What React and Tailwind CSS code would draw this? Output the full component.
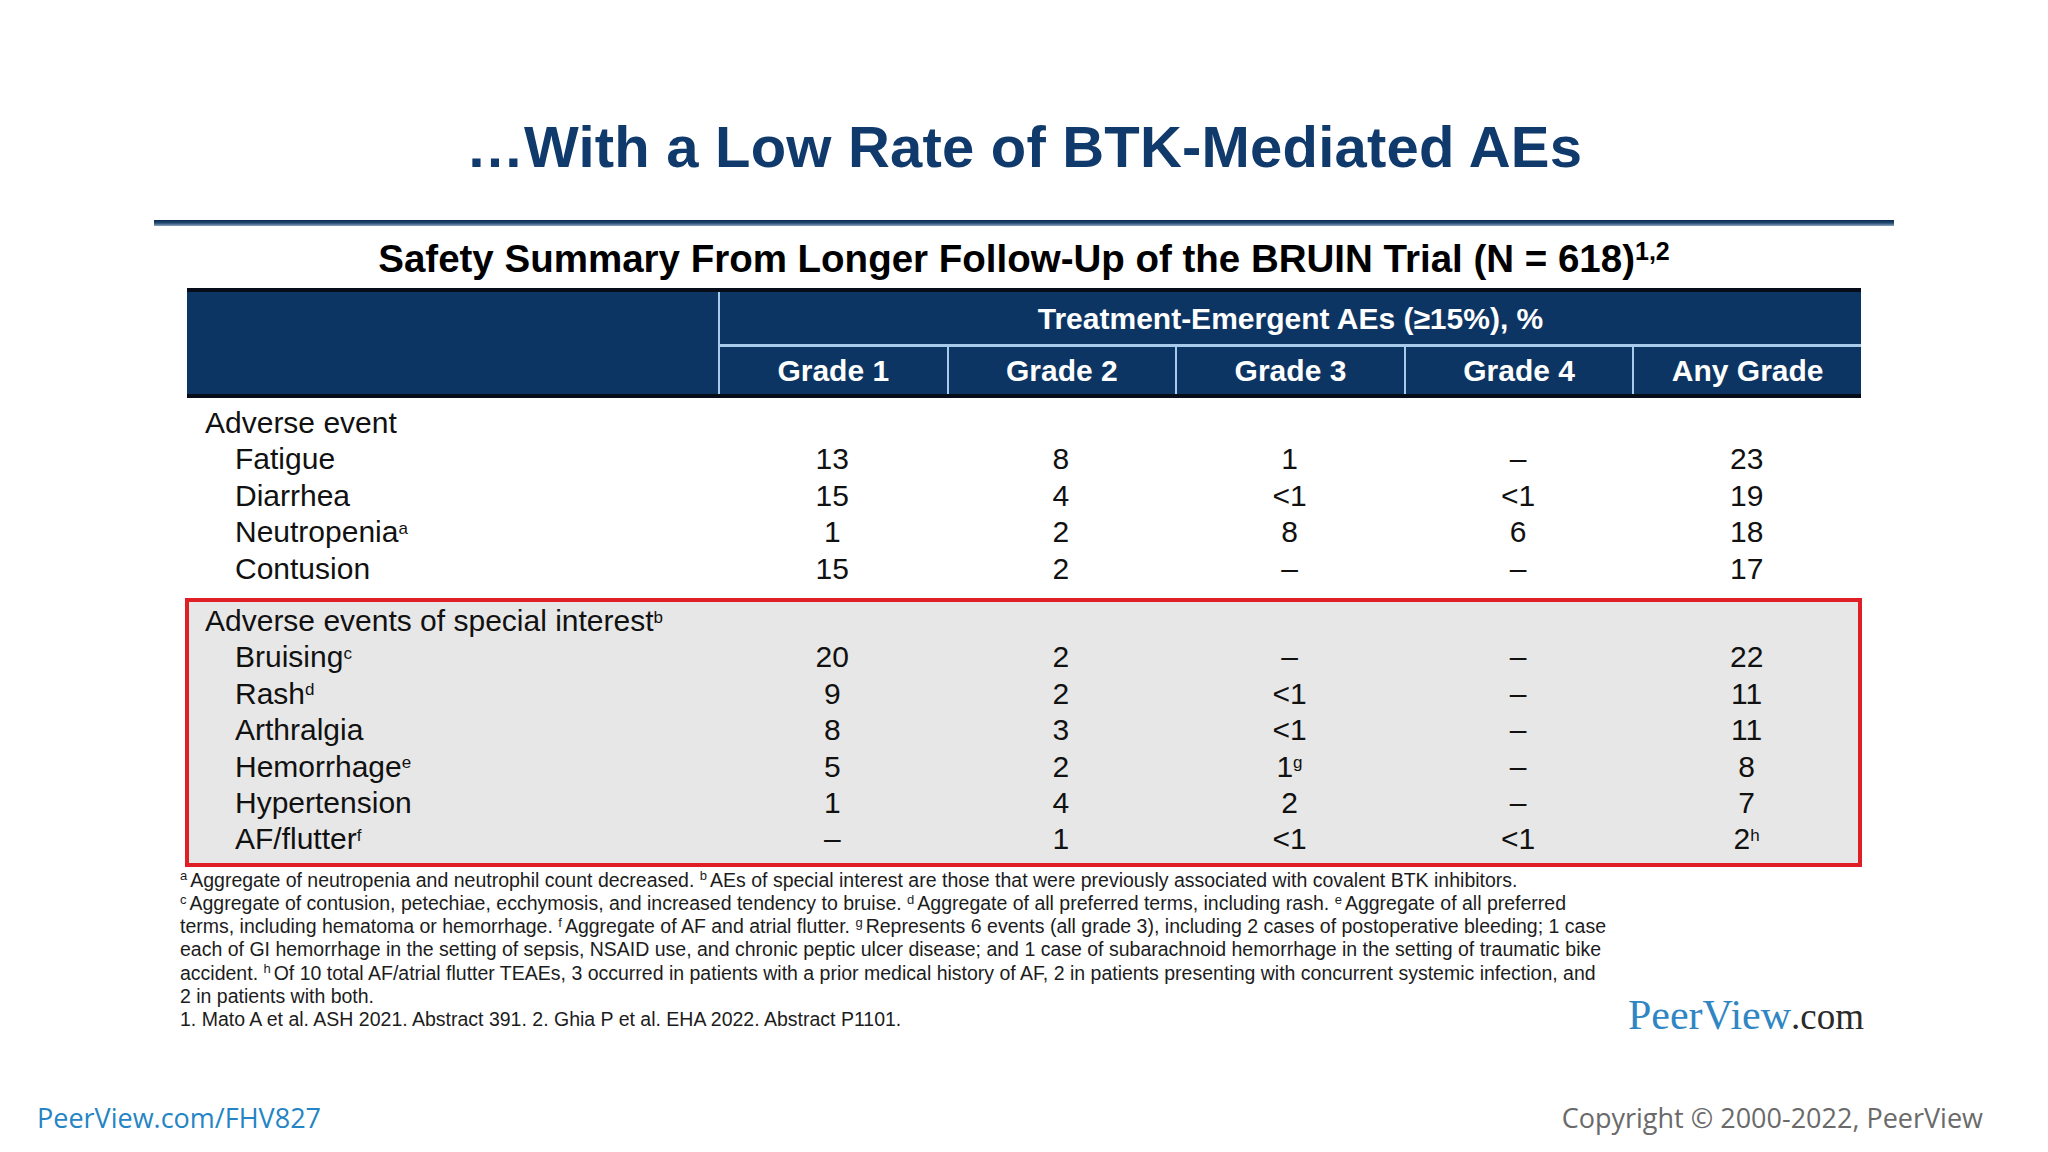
const grades = ['Grade 1', 'Grade 2', 'Grade 3', 'Grade 4', 'Any Grade']

const common = [
  { label: 'Fatigue', vals: ['13', '8', '1', '–', '23'] },
  { label: 'Diarrhea', vals: ['15', '4', '<1', '<1', '19'] },
  { label: 'Neutropenia', sup: 'a', vals: ['1', '2', '8', '6', '18'] },
  { label: 'Contusion', vals: ['15', '2', '–', '–', '17'] }
]

const special = [
  { label: 'Bruising', sup: 'c', vals: ['20', '2', '–', '–', '22'] },
  { label: 'Rash', sup: 'd', vals: ['9', '2', '<1', '–', '11'] },
  { label: 'Arthralgia', vals: ['8', '3', '<1', '–', '11'] },
  { label: 'Hemorrhage', sup: 'e', vals: ['5', '2', ['1', 'g'], '–', '8'] },
  { label: 'Hypertension', vals: ['1', '4', '2', '–', '7'] },
  { label: 'AF/flutter', sup: 'f', vals: ['–', '1', '<1', '<1', ['2', 'h']] }
]

function Sup({ children }) {
  return <sup className="text-[17px]">{children}</sup>
}

function Cell({ v }) {
  if (Array.isArray(v)) {
    return (
      <div className="text-center">
        {v[0]}
        <Sup>{v[1]}</Sup>
      </div>
    )
  }
  return <div className="text-center">{v}</div>
}

function Rows({ heading, headingSup, rows }) {
  return (
    <div className="grid grid-cols-[531px_repeat(5,1fr)] w-[1674px] text-[30px] leading-[36.4px] text-[#111]">
      <div className="col-span-6 pl-[18px]">
        {heading}
        {headingSup && <Sup>{headingSup}</Sup>}
      </div>
      {rows.map((r) => (
        <div key={r.label} className="contents">
          <div className="pl-[48px]">
            {r.label}
            {r.sup && <Sup>{r.sup}</Sup>}
          </div>
          {r.vals.map((v, i) => (
            <Cell key={i} v={v} />
          ))}
        </div>
      ))}
    </div>
  )
}

function FnSup({ children }) {
  return <sup className="text-[13px] mr-[3px]">{children}</sup>
}

export default function App() {
  return (
    <div className="w-[2048px] h-[1152px] bg-white flex flex-col font-['Liberation_Sans',Arial,sans-serif] overflow-hidden">
      <h1 className="pt-[112px] text-center text-[58px] leading-[70px] font-bold text-[#0f3a6b] tracking-[0.2px]">
        …With a Low Rate of BTK-Mediated AEs
      </h1>

      <div className="mt-[38px] ml-[154px] w-[1740px] h-[6px] bg-linear-to-b from-[#0b2a4e] via-[#234a72] to-[#8fa7bf]" />

      <h2 className="mt-[11px] text-center text-[38.5px] leading-[44px] font-bold text-black">
        Safety Summary From Longer Follow-Up of the BRUIN Trial (N = 618)
        <sup className="text-[25px]">1,2</sup>
      </h2>

      <div className="mt-[7px] ml-[187px] w-[1674px]">
        {/* header */}
        <div className="flex border-t-4 border-b-4 border-[#070d18] bg-[#0d3563] text-white font-bold text-[30px]">
          <div className="w-[531px] shrink-0" />
          <div className="flex-1 flex flex-col border-l-2 border-[#a9cbea]">
            <div className="h-[52px] flex items-center justify-center">
              Treatment-Emergent AEs (≥15%), %
            </div>
            <div className="flex border-t-[3px] border-[#a9cbea] h-[50px]">
              {grades.map((g, i) => (
                <div
                  key={g}
                  className={`flex-1 flex items-center justify-center ${i > 0 ? 'border-l-2 border-[#a9cbea]' : ''}`}
                >
                  {g}
                </div>
              ))}
            </div>
          </div>
        </div>

        <div className="mt-[7px]">
          <Rows heading="Adverse event" rows={common} />
        </div>

        <div className="mt-[11px] -ml-[2px] w-[1677px] border-4 border-[#df1f26] bg-[#e7e7e7] pt-[1px] pb-[5px]">
          <div className="-ml-[2px]">
            <Rows heading="Adverse events of special interest" headingSup="b" rows={special} />
          </div>
        </div>
      </div>

      <div className="mt-[2px] ml-[180px] w-[1684px] flex justify-between items-end">
        <div className="text-[19.5px] leading-[23.2px] text-[#1c1c1c] whitespace-nowrap">
          <div>
            <FnSup>a</FnSup>Aggregate of neutropenia and neutrophil count decreased. <FnSup>b</FnSup>AEs of special interest are those that were previously associated with covalent BTK inhibitors.
          </div>
          <div>
            <FnSup>c</FnSup>Aggregate of contusion, petechiae, ecchymosis, and increased tendency to bruise. <FnSup>d</FnSup>Aggregate of all preferred terms, including rash. <FnSup>e</FnSup>Aggregate of all preferred
          </div>
          <div>
            terms, including hematoma or hemorrhage. <FnSup>f</FnSup>Aggregate of AF and atrial flutter. <FnSup>g</FnSup>Represents 6 events (all grade 3), including 2 cases of postoperative bleeding; 1 case
          </div>
          <div>
            each of GI hemorrhage in the setting of sepsis, NSAID use, and chronic peptic ulcer disease; and 1 case of subarachnoid hemorrhage in the setting of traumatic bike
          </div>
          <div>
            accident. <FnSup>h</FnSup>Of 10 total AF/atrial flutter TEAEs, 3 occurred in patients with a prior medical history of AF, 2 in patients presenting with concurrent systemic infection, and
          </div>
          <div>2 in patients with both.</div>
          <div>1. Mato A et al. ASH 2021. Abstract 391. 2. Ghia P et al. EHA 2022. Abstract P1101.</div>
        </div>
        <div className="mb-[-7px] font-['Liberation_Serif',serif] text-[42px] leading-[42px] whitespace-nowrap">
          <span className="text-[#2f86c3]">PeerView</span>
          <span className="text-[#2a2a2a] text-[37px]">.com</span>
        </div>
      </div>

      <div className="mt-auto pb-[16px] pl-[37px] pr-[65px] flex justify-between font-['Open_Sans',sans-serif] text-[27px] leading-[36px]">
        <span className="text-[#2585c4]">PeerView.com/FHV827</span>
        <span className="text-[#6a6a6a]">Copyright © 2000-2022, PeerView</span>
      </div>
    </div>
  )
}
